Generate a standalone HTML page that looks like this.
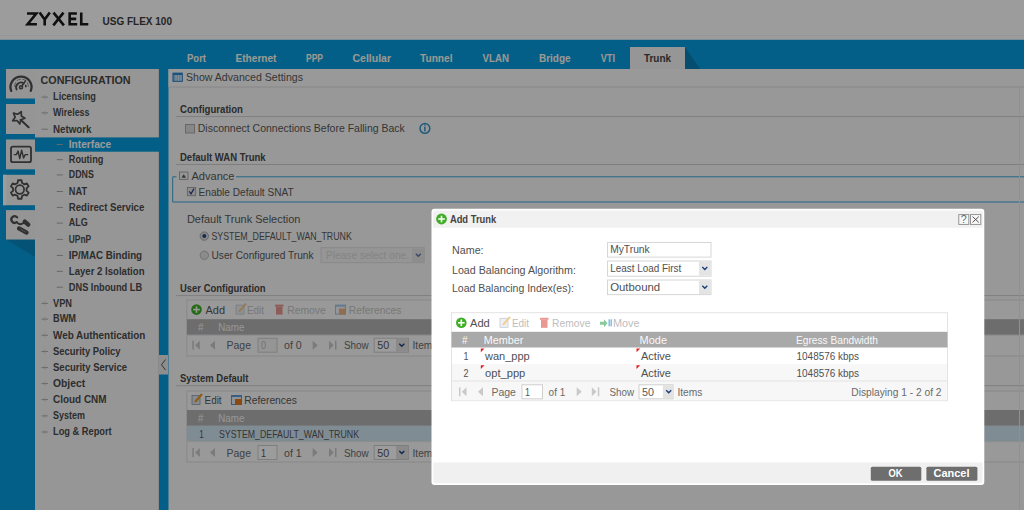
<!DOCTYPE html>
<html><head><meta charset="utf-8"><title>Zyxel USG FLEX 100 - Add Trunk</title>
<style>
html,body{margin:0;padding:0;width:1024px;height:510px;overflow:hidden;background:#5f5f5f;}
svg{display:block;font-family:"Liberation Sans",sans-serif;}
</style></head><body>
<svg width="1024" height="510" viewBox="0 0 1024 510" shape-rendering="auto">
<rect x="0.00" y="0.00" width="1024.00" height="510.00" fill="#059cdd" />
<rect x="0.00" y="0.00" width="1024.00" height="39.80" fill="#ffffff" />
<rect x="0.00" y="35.00" width="1024.00" height="1.00" fill="#faf4f8" />
<g fill="none" stroke="#1a1a1a" stroke-width="2.6" stroke-linejoin="miter" stroke-linecap="butt"><path d="M27,13.55 H36.3 L27.6,24.25 H36.9"/><path d="M39.6,12.6 L44.7,19.6 L49.8,12.6 M44.7,19.6 V25.4"/><path d="M53.5,12.6 L63.9,25.4 M63.5,12.6 L53.3,25.4"/><path d="M76.9,13.55 H69.65 V24.25 H77.2 M69.65,18.9 H76.2"/><path d="M81.25,12.4 V24.25 H88.3"/></g>
<text x="102.50" y="25.40" font-size="11.3" font-weight="bold" fill="#3c3c3c" textLength="69.50" lengthAdjust="spacingAndGlyphs" >USG FLEX 100</text>
<text x="187.00" y="61.80" font-size="10.6" font-weight="bold" fill="#fdfaf0" textLength="19.00" lengthAdjust="spacingAndGlyphs" >Port</text>
<text x="235.50" y="61.80" font-size="10.6" font-weight="bold" fill="#fdfaf0" textLength="41.00" lengthAdjust="spacingAndGlyphs" >Ethernet</text>
<text x="306.00" y="61.80" font-size="10.6" font-weight="bold" fill="#fdfaf0" textLength="17.00" lengthAdjust="spacingAndGlyphs" >PPP</text>
<text x="352.50" y="61.80" font-size="10.6" font-weight="bold" fill="#fdfaf0" textLength="38.50" lengthAdjust="spacingAndGlyphs" >Cellular</text>
<text x="420.00" y="61.80" font-size="10.6" font-weight="bold" fill="#fdfaf0" textLength="32.50" lengthAdjust="spacingAndGlyphs" >Tunnel</text>
<text x="482.60" y="61.80" font-size="10.6" font-weight="bold" fill="#fdfaf0" textLength="26.40" lengthAdjust="spacingAndGlyphs" >VLAN</text>
<text x="539.00" y="61.80" font-size="10.6" font-weight="bold" fill="#fdfaf0" textLength="31.60" lengthAdjust="spacingAndGlyphs" >Bridge</text>
<text x="600.70" y="61.80" font-size="10.6" font-weight="bold" fill="#fdfaf0" textLength="14.30" lengthAdjust="spacingAndGlyphs" >VTI</text>
<polygon points="685,47 700,69 685,69" fill="#0a7fb5"/>
<rect x="630.00" y="47.00" width="55.00" height="22.00" fill="#f6f6f6" />
<text x="644.00" y="61.80" font-size="10.6" font-weight="bold" fill="#444" textLength="27.00" lengthAdjust="spacingAndGlyphs" >Trunk</text>
<rect x="6.00" y="69.00" width="29.00" height="29.50" fill="#f4f4f4" />
<rect x="6.00" y="104.00" width="29.00" height="30.00" fill="#f4f4f4" />
<rect x="6.00" y="139.50" width="29.00" height="29.80" fill="#f4f4f4" />
<rect x="3.00" y="174.80" width="32.00" height="30.40" fill="#f6f6f6" />
<rect x="6.00" y="210.10" width="29.00" height="29.70" fill="#f4f4f4" />
<rect x="3.00" y="174.80" width="3.50" height="30.40" fill="#ffffff" />
<g fill="none" stroke="#505050" stroke-linecap="round"><path d="M11.2,90.9 A10.5,10.5 0 1 1 30.8,90.9" stroke-width="2.3"/><path d="M14.6,86.4 A7.3,7.3 0 0 1 15.6,82.5 M17.2,80.4 A7.3,7.3 0 0 1 20.6,79.2 M22.6,79.3 A7.3,7.3 0 0 1 26,80.6 M27.4,82.8 A7.3,7.3 0 0 1 28.3,86.4" stroke-width="0.8" stroke="#777"/><path d="M16.6,89.4 A4.9,4.9 0 0 1 23.6,83.2" stroke-width="1.9"/><path d="M25.9,86.6 A4.9,4.9 0 0 0 25.6,85.4" stroke-width="1.6"/><circle cx="21" cy="87.3" r="1.5" stroke-width="1.6"/><path d="M22,86 L25.4,80.8" stroke-width="1.5"/></g>
<g fill="none" stroke="#505050" stroke-width="1.7" stroke-linejoin="round"><path d="M13.50,113.08 L17.71,114.27 L21.29,111.57 L21.31,115.95 L24.95,118.30 L20.81,119.75 L19.77,123.96 L17.06,120.51 L12.68,120.80 L15.12,117.16 Z"/></g><path d="M20.6,119.8 L28.6,127.2" stroke="#505050" stroke-width="2.1" stroke-linecap="round"/>
<g fill="none" stroke="#505050" stroke-width="1.8" stroke-linejoin="round"><rect x="11" y="146.6" width="20" height="15.6" rx="2"/><polyline points="13.8,154.6 16.5,154.6 18,151 19.8,158.6 21.6,150.2 23.6,158 25.2,154.6 28.2,154.6" stroke-width="1.4"/></g>
<path d="M17.60,182.96 L18.04,180.27 L21.56,180.27 L22.00,182.96 L24.36,184.32 L26.92,183.36 L28.68,186.41 L26.56,188.14 L26.56,190.86 L28.68,192.59 L26.92,195.64 L24.36,194.68 L22.00,196.04 L21.56,198.73 L18.04,198.73 L17.60,196.04 L15.24,194.68 L12.68,195.64 L10.92,192.59 L13.04,190.86 L13.04,188.14 L10.92,186.41 L12.68,183.36 L15.24,184.32 Z" fill="none" stroke="#505050" stroke-width="1.8" stroke-linejoin="round"/><circle cx="19.8" cy="189.5" r="4.3" fill="none" stroke="#505050" stroke-width="1.7"/>
<g stroke="#505050" fill="none" stroke-linecap="round"><path d="M17.2,217.4 A3.3,3.3 0 1 0 16.6,222.2" stroke-width="2.2"/><path d="M16.6,222.2 Q19.5,225.4 22.3,223.6 L24.2,222.6" stroke-width="1.9"/><path d="M24.8,221.6 L28.2,224.6" stroke-width="4.4"/><path d="M19,228.4 L26.6,232.6" stroke-width="4.2"/></g><path d="M20.6,229.4 L25.2,231.8" stroke="#8a8a8a" stroke-width="0.9" stroke-linecap="round"/>
<polygon points="6,239.5 35,239.5 35,257" fill="#0a80b8" opacity="0.7"/>
<rect x="35.00" y="69.00" width="124.00" height="441.00" fill="#f6f6f6" />
<line x1="158.50" y1="69.00" x2="158.50" y2="510.00" stroke="#e2e2e2" stroke-width="1" />
<text x="40.60" y="83.50" font-size="11" font-weight="bold" fill="#474747" textLength="90.00" lengthAdjust="spacingAndGlyphs" >CONFIGURATION</text>
<line x1="41.60" y1="97.10" x2="47.80" y2="97.10" stroke="#a8a8a8" stroke-width="1" />
<line x1="44.70" y1="95.10" x2="44.70" y2="99.10" stroke="#c8c8c8" stroke-width="0.8" />
<text x="53.00" y="100.40" font-size="10.2" font-weight="bold" fill="#4a4a4a" textLength="43.00" lengthAdjust="spacingAndGlyphs" >Licensing</text>
<line x1="41.60" y1="112.90" x2="47.80" y2="112.90" stroke="#a8a8a8" stroke-width="1" />
<line x1="44.70" y1="110.90" x2="44.70" y2="114.90" stroke="#c8c8c8" stroke-width="0.8" />
<text x="53.00" y="116.20" font-size="10.2" font-weight="bold" fill="#4a4a4a" textLength="36.50" lengthAdjust="spacingAndGlyphs" >Wireless</text>
<line x1="41.60" y1="129.20" x2="47.80" y2="129.20" stroke="#a8a8a8" stroke-width="1" />
<text x="53.00" y="132.50" font-size="10.2" font-weight="bold" fill="#4a4a4a" textLength="38.50" lengthAdjust="spacingAndGlyphs" >Network</text>
<rect x="35.00" y="137.40" width="124.00" height="14.30" fill="#059cdd" />
<line x1="56.70" y1="144.50" x2="62.90" y2="144.50" stroke="#a8a8a8" stroke-width="1" />
<text x="68.80" y="147.80" font-size="10.2" font-weight="bold" fill="#fdfdfd" textLength="42.30" lengthAdjust="spacingAndGlyphs" >Interface</text>
<line x1="56.70" y1="159.70" x2="62.90" y2="159.70" stroke="#a8a8a8" stroke-width="1" />
<text x="68.80" y="163.00" font-size="10.2" font-weight="bold" fill="#4a4a4a" textLength="34.50" lengthAdjust="spacingAndGlyphs" >Routing</text>
<line x1="56.70" y1="174.90" x2="62.90" y2="174.90" stroke="#a8a8a8" stroke-width="1" />
<text x="68.80" y="178.20" font-size="10.2" font-weight="bold" fill="#4a4a4a" textLength="25.00" lengthAdjust="spacingAndGlyphs" >DDNS</text>
<line x1="56.70" y1="191.50" x2="62.90" y2="191.50" stroke="#a8a8a8" stroke-width="1" />
<text x="68.80" y="194.80" font-size="10.2" font-weight="bold" fill="#4a4a4a" textLength="18.20" lengthAdjust="spacingAndGlyphs" >NAT</text>
<line x1="56.70" y1="207.40" x2="62.90" y2="207.40" stroke="#a8a8a8" stroke-width="1" />
<text x="68.80" y="210.70" font-size="10.2" font-weight="bold" fill="#4a4a4a" textLength="75.50" lengthAdjust="spacingAndGlyphs" >Redirect Service</text>
<line x1="56.70" y1="223.10" x2="62.90" y2="223.10" stroke="#a8a8a8" stroke-width="1" />
<text x="68.80" y="226.40" font-size="10.2" font-weight="bold" fill="#4a4a4a" textLength="19.00" lengthAdjust="spacingAndGlyphs" >ALG</text>
<line x1="56.70" y1="239.40" x2="62.90" y2="239.40" stroke="#a8a8a8" stroke-width="1" />
<text x="68.80" y="242.70" font-size="10.2" font-weight="bold" fill="#4a4a4a" textLength="22.30" lengthAdjust="spacingAndGlyphs" >UPnP</text>
<line x1="56.70" y1="255.40" x2="62.90" y2="255.40" stroke="#a8a8a8" stroke-width="1" />
<text x="68.80" y="258.70" font-size="10.2" font-weight="bold" fill="#4a4a4a" textLength="73.30" lengthAdjust="spacingAndGlyphs" >IP/MAC Binding</text>
<line x1="56.70" y1="271.30" x2="62.90" y2="271.30" stroke="#a8a8a8" stroke-width="1" />
<text x="68.80" y="274.60" font-size="10.2" font-weight="bold" fill="#4a4a4a" textLength="75.70" lengthAdjust="spacingAndGlyphs" >Layer 2 Isolation</text>
<line x1="56.70" y1="287.20" x2="62.90" y2="287.20" stroke="#a8a8a8" stroke-width="1" />
<text x="68.80" y="290.50" font-size="10.2" font-weight="bold" fill="#4a4a4a" textLength="73.30" lengthAdjust="spacingAndGlyphs" >DNS Inbound LB</text>
<line x1="41.60" y1="303.40" x2="47.80" y2="303.40" stroke="#a8a8a8" stroke-width="1" />
<line x1="44.70" y1="301.40" x2="44.70" y2="305.40" stroke="#c8c8c8" stroke-width="0.8" />
<text x="53.00" y="306.70" font-size="10.2" font-weight="bold" fill="#4a4a4a" textLength="19.00" lengthAdjust="spacingAndGlyphs" >VPN</text>
<line x1="41.60" y1="319.10" x2="47.80" y2="319.10" stroke="#a8a8a8" stroke-width="1" />
<line x1="44.70" y1="317.10" x2="44.70" y2="321.10" stroke="#c8c8c8" stroke-width="0.8" />
<text x="53.00" y="322.40" font-size="10.2" font-weight="bold" fill="#4a4a4a" textLength="23.00" lengthAdjust="spacingAndGlyphs" >BWM</text>
<line x1="41.60" y1="335.30" x2="47.80" y2="335.30" stroke="#a8a8a8" stroke-width="1" />
<line x1="44.70" y1="333.30" x2="44.70" y2="337.30" stroke="#c8c8c8" stroke-width="0.8" />
<text x="53.00" y="338.60" font-size="10.2" font-weight="bold" fill="#4a4a4a" textLength="92.30" lengthAdjust="spacingAndGlyphs" >Web Authentication</text>
<line x1="41.60" y1="351.50" x2="47.80" y2="351.50" stroke="#a8a8a8" stroke-width="1" />
<line x1="44.70" y1="349.50" x2="44.70" y2="353.50" stroke="#c8c8c8" stroke-width="0.8" />
<text x="53.00" y="354.80" font-size="10.2" font-weight="bold" fill="#4a4a4a" textLength="67.50" lengthAdjust="spacingAndGlyphs" >Security Policy</text>
<line x1="41.60" y1="367.60" x2="47.80" y2="367.60" stroke="#a8a8a8" stroke-width="1" />
<line x1="44.70" y1="365.60" x2="44.70" y2="369.60" stroke="#c8c8c8" stroke-width="0.8" />
<text x="53.00" y="370.90" font-size="10.2" font-weight="bold" fill="#4a4a4a" textLength="74.00" lengthAdjust="spacingAndGlyphs" >Security Service</text>
<line x1="41.60" y1="383.60" x2="47.80" y2="383.60" stroke="#a8a8a8" stroke-width="1" />
<line x1="44.70" y1="381.60" x2="44.70" y2="385.60" stroke="#c8c8c8" stroke-width="0.8" />
<text x="53.00" y="386.90" font-size="10.2" font-weight="bold" fill="#4a4a4a" textLength="32.20" lengthAdjust="spacingAndGlyphs" >Object</text>
<line x1="41.60" y1="399.60" x2="47.80" y2="399.60" stroke="#a8a8a8" stroke-width="1" />
<line x1="44.70" y1="397.60" x2="44.70" y2="401.60" stroke="#c8c8c8" stroke-width="0.8" />
<text x="53.00" y="402.90" font-size="10.2" font-weight="bold" fill="#4a4a4a" textLength="53.50" lengthAdjust="spacingAndGlyphs" >Cloud CNM</text>
<line x1="41.60" y1="415.90" x2="47.80" y2="415.90" stroke="#a8a8a8" stroke-width="1" />
<line x1="44.70" y1="413.90" x2="44.70" y2="417.90" stroke="#c8c8c8" stroke-width="0.8" />
<text x="53.00" y="419.20" font-size="10.2" font-weight="bold" fill="#4a4a4a" textLength="32.00" lengthAdjust="spacingAndGlyphs" >System</text>
<line x1="41.60" y1="432.00" x2="47.80" y2="432.00" stroke="#a8a8a8" stroke-width="1" />
<line x1="44.70" y1="430.00" x2="44.70" y2="434.00" stroke="#c8c8c8" stroke-width="0.8" />
<text x="53.00" y="435.30" font-size="10.2" font-weight="bold" fill="#4a4a4a" textLength="58.70" lengthAdjust="spacingAndGlyphs" >Log &amp; Report</text>
<rect x="159.00" y="355.00" width="9.00" height="19.50" fill="#e8e8e8" />
<polyline points="165.5,359.5 161.5,364.8 165.5,370" fill="none" stroke="#555" stroke-width="1"/>
<rect x="168.50" y="69.00" width="855.50" height="441.00" fill="#f9f9f9" />
<rect x="168.50" y="69.00" width="855.50" height="18.00" fill="#fbfbfb" />
<line x1="168.50" y1="87.00" x2="1024.00" y2="87.00" stroke="#dcdcdc" stroke-width="1" />
<rect x="172.40" y="72.60" width="10.50" height="9.30" fill="#2f86cc" />
<rect x="173.60" y="75.00" width="8.10" height="5.80" fill="#8cc4ec" />
<rect x="175.60" y="75.00" width="0.90" height="5.80" fill="#f4f8fc" />
<rect x="178.20" y="75.00" width="0.90" height="5.80" fill="#f4f8fc" />
<rect x="180.60" y="75.00" width="0.90" height="5.80" fill="#f4f8fc" />
<text x="186.00" y="81.30" font-size="11" font-weight="normal" fill="#585858" textLength="117.00" lengthAdjust="spacingAndGlyphs" >Show Advanced Settings</text>
<text x="180.00" y="112.70" font-size="10.5" font-weight="bold" fill="#474747" textLength="63.00" lengthAdjust="spacingAndGlyphs" >Configuration</text>
<line x1="176.00" y1="116.60" x2="1024.00" y2="116.60" stroke="#cfcfcf" stroke-width="1" />
<rect x="185.50" y="124.50" width="9.00" height="8.50" fill="#dddddd" stroke="#aaaaaa" stroke-width="1"/>
<text x="197.80" y="132.00" font-size="11" font-weight="normal" fill="#585858" textLength="207.00" lengthAdjust="spacingAndGlyphs" >Disconnect Connections Before Falling Back</text>
<circle cx="424.9" cy="128.4" r="4.9" fill="none" stroke="#3596c4" stroke-width="1.5"/>
<rect x="424.20" y="126.60" width="1.40" height="4.80" fill="#2f86c8" />
<rect x="424.20" y="124.40" width="1.40" height="1.20" fill="#2f86c8" />
<text x="180.00" y="160.60" font-size="10.5" font-weight="bold" fill="#474747" textLength="85.60" lengthAdjust="spacingAndGlyphs" >Default WAN Trunk</text>
<line x1="176.00" y1="164.50" x2="1024.00" y2="164.50" stroke="#cfcfcf" stroke-width="1" />
<path d="M176.5,176.8 H172.7 V202 H1030" fill="none" stroke="#3aa6dc" stroke-width="1"/>
<line x1="236.00" y1="176.80" x2="1030.00" y2="176.80" stroke="#3aa6dc" stroke-width="1" />
<rect x="179.50" y="172.00" width="8.50" height="7.50" fill="#f2f2f2" stroke="#999" stroke-width="0.8"/>
<polygon points="181.5,177.8 183.8,174.3 186,177.8" fill="#555"/>
<text x="191.50" y="179.50" font-size="11" font-weight="normal" fill="#585858" textLength="43.00" lengthAdjust="spacingAndGlyphs" >Advance</text>
<rect x="187.30" y="187.50" width="8.40" height="8.20" fill="#e6e6e6" stroke="#999" stroke-width="0.8"/>
<polyline points="189.2,191.4 191,193.8 194,188.6" fill="none" stroke="#2a3a8a" stroke-width="1.2"/>
<text x="198.60" y="196.00" font-size="11" font-weight="normal" fill="#585858" textLength="95.00" lengthAdjust="spacingAndGlyphs" >Enable Default SNAT</text>
<text x="186.90" y="223.30" font-size="11.5" font-weight="normal" fill="#585858" textLength="113.50" lengthAdjust="spacingAndGlyphs" >Default Trunk Selection</text>
<circle cx="204.3" cy="236.1" r="4.2" fill="#ddd" stroke="#999" stroke-width="0.8"/><circle cx="204.3" cy="236.1" r="2" fill="#1c4a80"/>
<text x="211.50" y="240.20" font-size="11" font-weight="normal" fill="#585858" textLength="140.30" lengthAdjust="spacingAndGlyphs" >SYSTEM_DEFAULT_WAN_TRUNK</text>
<circle cx="204.3" cy="255.3" r="4.2" fill="#e4e4e4" stroke="#aaa" stroke-width="0.8"/>
<text x="211.50" y="259.40" font-size="11" font-weight="normal" fill="#585858" textLength="102.00" lengthAdjust="spacingAndGlyphs" >User Configured Trunk</text>
<rect x="321.00" y="247.60" width="103.20" height="15.10" fill="#f3f3f3" stroke="#e0e0e0" stroke-width="1"/>
<rect x="412.00" y="248.50" width="12.00" height="13.50" fill="#e6e6e6" />
<text x="326.00" y="258.80" font-size="11" font-weight="normal" fill="#d9d9d9" textLength="83.00" lengthAdjust="spacingAndGlyphs" >Please select one.</text>
<polyline points="415.8,253.8 418.3,256.3 420.8,253.8" fill="none" stroke="#5a78a8" stroke-width="1.3"/>
<text x="180.00" y="291.70" font-size="10.5" font-weight="bold" fill="#474747" textLength="85.60" lengthAdjust="spacingAndGlyphs" >User Configuration</text>
<line x1="176.00" y1="295.60" x2="1024.00" y2="295.60" stroke="#cfcfcf" stroke-width="1" />
<rect x="186.90" y="300.00" width="843.10" height="56.00" fill="#fafafa" stroke="#dedede" stroke-width="1"/>
<circle cx="196.5" cy="309.6" r="5.3" fill="#3fae26"/>
<rect x="193.20" y="308.80" width="6.60" height="1.60" fill="#f4fff0" />
<rect x="195.70" y="306.30" width="1.60" height="6.60" fill="#f4fff0" />
<text x="205.50" y="313.50" font-size="11" font-weight="normal" fill="#585858" textLength="19.50" lengthAdjust="spacingAndGlyphs" >Add</text>
<g opacity="0.5"><rect x="236" y="305.1" width="8" height="9" fill="#dfe3ea" stroke="#8a9ab0" stroke-width="0.8"/><line x1="239" y1="311.6" x2="246" y2="303.6" stroke="#e89a1a" stroke-width="2"/></g>
<text x="247.00" y="313.50" font-size="11" font-weight="normal" fill="#c4c4c4" textLength="17.00" lengthAdjust="spacingAndGlyphs" >Edit</text>
<g opacity="0.55"><rect x="275" y="304.6" width="8.5" height="2" fill="#d9443a"/><rect x="276" y="306.6" width="6.5" height="8" fill="#d9443a"/></g>
<text x="287.20" y="313.50" font-size="11" font-weight="normal" fill="#c4c4c4" textLength="38.60" lengthAdjust="spacingAndGlyphs" >Remove</text>
<g opacity="0.55"><rect x="335" y="304.6" width="11" height="10" fill="#5b9bd8"/><rect x="336" y="306.6" width="9" height="7" fill="#e8eef5"/><rect x="339" y="308.6" width="7" height="6" fill="#e07a20"/></g>
<text x="348.80" y="313.50" font-size="11" font-weight="normal" fill="#c4c4c4" textLength="52.70" lengthAdjust="spacingAndGlyphs" >References</text>
<rect x="186.90" y="319.20" width="843.10" height="15.90" fill="#b2b2b2" />
<text x="198.00" y="331.00" font-size="10" font-weight="normal" fill="#f5f5f5" textLength="5.50" lengthAdjust="spacingAndGlyphs" >#</text>
<text x="218.30" y="331.00" font-size="11" font-weight="normal" fill="#f5f5f5" textLength="26.00" lengthAdjust="spacingAndGlyphs" >Name</text>
<line x1="186.90" y1="335.10" x2="1030.00" y2="335.10" stroke="#e5e5e5" stroke-width="1" />
<rect x="192.30" y="340.70" width="1.50" height="9.00" fill="#c9c9c9" />
<polygon points="199.8,340.7 195.10000000000002,345.2 199.8,349.7" fill="#c9c9c9"/>
<polygon points="215,340.7 210,345.2 215,349.7" fill="#c9c9c9"/>
<text x="226.50" y="349.20" font-size="11" font-weight="normal" fill="#6a6a6a" textLength="24.50" lengthAdjust="spacingAndGlyphs" >Page</text>
<rect x="258.00" y="338.20" width="19.00" height="14.00" fill="#f4f4f4" stroke="#cfcfcf" stroke-width="1"/>
<text x="261.00" y="349.20" font-size="11" font-weight="normal" fill="#bbb" textLength="5.00" lengthAdjust="spacingAndGlyphs" >0</text>
<text x="284.00" y="349.20" font-size="11" font-weight="normal" fill="#6a6a6a" textLength="17.70" lengthAdjust="spacingAndGlyphs" >of 0</text>
<polygon points="312.7,340.7 317.7,345.2 312.7,349.7" fill="#c9c9c9"/>
<polygon points="329,340.7 333.7,345.2 329,349.7" fill="#c9c9c9"/>
<rect x="335.00" y="340.70" width="1.50" height="9.00" fill="#c9c9c9" />
<text x="344.00" y="349.20" font-size="11" font-weight="normal" fill="#6a6a6a" textLength="24.70" lengthAdjust="spacingAndGlyphs" >Show</text>
<rect x="374.20" y="338.20" width="34.20" height="14.00" fill="#ffffff" stroke="#cfcfcf" stroke-width="1"/>
<rect x="396.00" y="338.70" width="11.90" height="13.00" fill="#e2e2e2" />
<polyline points="399.3,343.7 401.8,346.2 404.3,343.7" fill="none" stroke="#1d3f7a" stroke-width="1.4"/>
<text x="377.20" y="349.20" font-size="11" font-weight="normal" fill="#585858" textLength="12.00" lengthAdjust="spacingAndGlyphs" >50</text>
<text x="412.50" y="349.20" font-size="11" font-weight="normal" fill="#6a6a6a" textLength="25.00" lengthAdjust="spacingAndGlyphs" >Items</text>
<text x="180.00" y="381.80" font-size="10.5" font-weight="bold" fill="#474747" textLength="68.40" lengthAdjust="spacingAndGlyphs" >System Default</text>
<line x1="176.00" y1="385.70" x2="1024.00" y2="385.70" stroke="#cfcfcf" stroke-width="1" />
<rect x="186.90" y="391.00" width="843.10" height="71.00" fill="#fafafa" stroke="#dedede" stroke-width="1"/>
<g opacity="1"><rect x="192" y="395.5" width="8" height="9" fill="#dfe3ea" stroke="#8a9ab0" stroke-width="0.8"/><line x1="195" y1="402" x2="202" y2="394" stroke="#e89a1a" stroke-width="2"/></g>
<text x="204.60" y="404.00" font-size="11" font-weight="normal" fill="#585858" textLength="17.00" lengthAdjust="spacingAndGlyphs" >Edit</text>
<g opacity="1"><rect x="231" y="395" width="11" height="10" fill="#5b9bd8"/><rect x="232" y="397" width="9" height="7" fill="#e8eef5"/><rect x="235" y="399" width="7" height="6" fill="#e07a20"/></g>
<text x="244.30" y="404.00" font-size="11" font-weight="normal" fill="#585858" textLength="52.50" lengthAdjust="spacingAndGlyphs" >References</text>
<rect x="186.90" y="410.00" width="843.10" height="15.80" fill="#b2b2b2" />
<text x="198.00" y="421.80" font-size="10" font-weight="normal" fill="#f5f5f5" textLength="5.50" lengthAdjust="spacingAndGlyphs" >#</text>
<text x="218.30" y="421.50" font-size="11" font-weight="normal" fill="#f5f5f5" textLength="26.00" lengthAdjust="spacingAndGlyphs" >Name</text>
<rect x="186.90" y="425.80" width="843.10" height="15.80" fill="#d2e5f2" />
<text x="199.20" y="437.80" font-size="11" font-weight="normal" fill="#585858" textLength="4.50" lengthAdjust="spacingAndGlyphs" >1</text>
<text x="219.00" y="437.50" font-size="11" font-weight="normal" fill="#585858" textLength="140.00" lengthAdjust="spacingAndGlyphs" >SYSTEM_DEFAULT_WAN_TRUNK</text>
<line x1="186.90" y1="441.60" x2="1030.00" y2="441.60" stroke="#e5e5e5" stroke-width="1" />
<rect x="192.30" y="448.00" width="1.50" height="9.00" fill="#c9c9c9" />
<polygon points="199.8,448.0 195.10000000000002,452.5 199.8,457.0" fill="#c9c9c9"/>
<polygon points="215,448.0 210,452.5 215,457.0" fill="#c9c9c9"/>
<text x="226.50" y="456.50" font-size="11" font-weight="normal" fill="#6a6a6a" textLength="24.50" lengthAdjust="spacingAndGlyphs" >Page</text>
<rect x="258.00" y="445.50" width="19.00" height="14.00" fill="#ffffff" stroke="#cfcfcf" stroke-width="1"/>
<text x="261.00" y="456.50" font-size="11" font-weight="normal" fill="#585858" textLength="5.00" lengthAdjust="spacingAndGlyphs" >1</text>
<text x="284.00" y="456.50" font-size="11" font-weight="normal" fill="#6a6a6a" textLength="17.70" lengthAdjust="spacingAndGlyphs" >of 1</text>
<polygon points="312.7,448.0 317.7,452.5 312.7,457.0" fill="#c9c9c9"/>
<polygon points="329,448.0 333.7,452.5 329,457.0" fill="#c9c9c9"/>
<rect x="335.00" y="448.00" width="1.50" height="9.00" fill="#c9c9c9" />
<text x="344.00" y="456.50" font-size="11" font-weight="normal" fill="#6a6a6a" textLength="24.70" lengthAdjust="spacingAndGlyphs" >Show</text>
<rect x="374.20" y="445.50" width="34.20" height="14.00" fill="#ffffff" stroke="#cfcfcf" stroke-width="1"/>
<rect x="396.00" y="446.00" width="11.90" height="13.00" fill="#e2e2e2" />
<polyline points="399.3,451.0 401.8,453.5 404.3,451.0" fill="none" stroke="#1d3f7a" stroke-width="1.4"/>
<text x="377.20" y="456.50" font-size="11" font-weight="normal" fill="#585858" textLength="12.00" lengthAdjust="spacingAndGlyphs" >50</text>
<text x="412.50" y="456.50" font-size="11" font-weight="normal" fill="#6a6a6a" textLength="25.00" lengthAdjust="spacingAndGlyphs" >Items</text>
<line x1="1019.50" y1="87.00" x2="1019.50" y2="510.00" stroke="#ececec" stroke-width="1" />
<rect x="0.00" y="0.00" width="1024.00" height="510.00" fill="#000" fill-opacity="0.39"/>
<rect x="431.5" y="208.8" width="552.8" height="276.2" rx="3" fill="#ffffff"/>
<path d="M433,227.7 V212.8 Q433,210.6 435.2,210.6 H980.6 Q982.8,210.6 982.8,212.8 V227.7 Z" fill="#f1f1f1"/>
<path d="M433.3,462.6 V480.8 Q433.3,483.2 435.7,483.2 H980.1 Q982.5,483.2 982.5,480.8 V462.6 Z" fill="#f0f0f0"/>
<circle cx="441.5" cy="219" r="5.4" fill="#3fae26"/>
<rect x="438.20" y="218.20" width="6.60" height="1.60" fill="#f4fff0" />
<rect x="440.70" y="215.70" width="1.60" height="6.60" fill="#f4fff0" />
<text x="449.90" y="223.10" font-size="10.8" font-weight="bold" fill="#444" textLength="46.30" lengthAdjust="spacingAndGlyphs" >Add Trunk</text>
<rect x="958.80" y="214.60" width="10.00" height="9.80" fill="#f7f7f7" stroke="#8a8a8a" stroke-width="0.9"/>
<text x="960.80" y="223.00" font-size="10" font-weight="normal" fill="#666" textLength="6.00" lengthAdjust="spacingAndGlyphs" >?</text>
<rect x="970.50" y="214.60" width="10.30" height="9.80" fill="#f7f7f7" stroke="#8a8a8a" stroke-width="0.9"/>
<path d="M972.5,216.6 L978.8,222.4 M978.8,216.6 L972.5,222.4" stroke="#555" stroke-width="1"/>
<text x="452.00" y="254.10" font-size="11" font-weight="normal" fill="#505050" textLength="31.60" lengthAdjust="spacingAndGlyphs" >Name:</text>
<text x="452.00" y="273.70" font-size="11" font-weight="normal" fill="#505050" textLength="123.90" lengthAdjust="spacingAndGlyphs" >Load Balancing Algorithm:</text>
<text x="452.00" y="292.10" font-size="11" font-weight="normal" fill="#505050" textLength="121.80" lengthAdjust="spacingAndGlyphs" >Load Balancing Index(es):</text>
<rect x="607.50" y="242.50" width="103.50" height="14.60" fill="#ffffff" stroke="#d6d6d6" stroke-width="1"/>
<text x="610.20" y="253.10" font-size="11" font-weight="normal" fill="#505050" textLength="39.50" lengthAdjust="spacingAndGlyphs" >MyTrunk</text>
<rect x="607.50" y="261.00" width="103.50" height="15.20" fill="#ffffff" stroke="#d6d6d6" stroke-width="1"/>
<rect x="699.00" y="261.50" width="11.50" height="14.20" fill="#e4e4e4" />
<polyline points="702.3,267.1 704.8,269.6 707.3,267.1" fill="none" stroke="#1d3f7a" stroke-width="1.4"/>
<text x="610.20" y="272.00" font-size="11" font-weight="normal" fill="#505050" textLength="71.00" lengthAdjust="spacingAndGlyphs" >Least Load First</text>
<rect x="607.50" y="280.00" width="103.50" height="14.60" fill="#ffffff" stroke="#d6d6d6" stroke-width="1"/>
<rect x="699.00" y="280.50" width="11.50" height="13.60" fill="#e4e4e4" />
<polyline points="702.3,285.8 704.8,288.3 707.3,285.8" fill="none" stroke="#1d3f7a" stroke-width="1.4"/>
<text x="610.20" y="290.70" font-size="11" font-weight="normal" fill="#505050" textLength="50.00" lengthAdjust="spacingAndGlyphs" >Outbound</text>
<rect x="451.50" y="312.70" width="496.00" height="88.00" fill="#ffffff" stroke="#e3e3e3" stroke-width="1"/>
<circle cx="461.3" cy="322.8" r="5.3" fill="#3fae26"/>
<rect x="458.00" y="322.00" width="6.60" height="1.60" fill="#f4fff0" />
<rect x="460.50" y="319.50" width="1.60" height="6.60" fill="#f4fff0" />
<text x="470.00" y="326.80" font-size="11" font-weight="normal" fill="#505050" textLength="19.80" lengthAdjust="spacingAndGlyphs" >Add</text>
<g opacity="0.5"><rect x="500" y="318.3" width="8" height="9" fill="#dfe3ea" stroke="#8a9ab0" stroke-width="0.8"/><line x1="503" y1="324.8" x2="510" y2="316.8" stroke="#e89a1a" stroke-width="2"/></g>
<text x="512.00" y="326.80" font-size="11" font-weight="normal" fill="#bdbdbd" textLength="17.00" lengthAdjust="spacingAndGlyphs" >Edit</text>
<g opacity="0.55"><rect x="540" y="317.8" width="8.5" height="2" fill="#d9443a"/><rect x="541" y="319.8" width="6.5" height="8" fill="#d9443a"/></g>
<text x="552.00" y="326.80" font-size="11" font-weight="normal" fill="#bdbdbd" textLength="38.40" lengthAdjust="spacingAndGlyphs" >Remove</text>
<g opacity="0.6"><polygon points="600,321.8 604,321.8 604,319.3 607.5,323.3 604,327.3 604,324.8 600,324.8" fill="#3aa85a"/><rect x="608.5" y="319.3" width="1.4" height="7" fill="#2a8ad0"/><rect x="610.5" y="319.3" width="1.4" height="7" fill="#2a8ad0"/></g>
<text x="613.00" y="326.80" font-size="11" font-weight="normal" fill="#bdbdbd" textLength="26.60" lengthAdjust="spacingAndGlyphs" >Move</text>
<rect x="451.50" y="331.80" width="496.00" height="15.70" fill="#a9a9a9" />
<text x="462.00" y="343.60" font-size="10" font-weight="normal" fill="#f8f8f8" textLength="5.50" lengthAdjust="spacingAndGlyphs" >#</text>
<text x="483.70" y="343.60" font-size="11" font-weight="normal" fill="#f8f8f8" textLength="39.70" lengthAdjust="spacingAndGlyphs" >Member</text>
<text x="639.60" y="343.60" font-size="11" font-weight="normal" fill="#f8f8f8" textLength="27.40" lengthAdjust="spacingAndGlyphs" >Mode</text>
<text x="796.00" y="343.60" font-size="11" font-weight="normal" fill="#f8f8f8" textLength="82.00" lengthAdjust="spacingAndGlyphs" >Egress Bandwidth</text>
<rect x="452.00" y="364.20" width="495.00" height="16.80" fill="#f7f7f7" />
<text x="463.50" y="359.90" font-size="11" font-weight="normal" fill="#505050" textLength="5.00" lengthAdjust="spacingAndGlyphs" >1</text>
<polygon points="480.8,348.5 484.5,348.5 480.8,352.29999999999995" fill="#e02020"/>
<text x="485.00" y="359.90" font-size="11" font-weight="normal" fill="#505050" textLength="44.70" lengthAdjust="spacingAndGlyphs" >wan_ppp</text>
<polygon points="636.5,348.5 640.2,348.5 636.5,352.29999999999995" fill="#e02020"/>
<text x="641.00" y="359.90" font-size="11" font-weight="normal" fill="#505050" textLength="30.00" lengthAdjust="spacingAndGlyphs" >Active</text>
<text x="796.60" y="359.90" font-size="11" font-weight="normal" fill="#505050" textLength="62.30" lengthAdjust="spacingAndGlyphs" >1048576 kbps</text>
<text x="463.50" y="376.60" font-size="11" font-weight="normal" fill="#505050" textLength="5.00" lengthAdjust="spacingAndGlyphs" >2</text>
<polygon points="480.8,365.20000000000005 484.5,365.20000000000005 480.8,369.0" fill="#e02020"/>
<text x="485.00" y="376.60" font-size="11" font-weight="normal" fill="#505050" textLength="40.30" lengthAdjust="spacingAndGlyphs" >opt_ppp</text>
<polygon points="636.5,365.20000000000005 640.2,365.20000000000005 636.5,369.0" fill="#e02020"/>
<text x="641.00" y="376.60" font-size="11" font-weight="normal" fill="#505050" textLength="30.00" lengthAdjust="spacingAndGlyphs" >Active</text>
<text x="796.60" y="376.60" font-size="11" font-weight="normal" fill="#505050" textLength="62.30" lengthAdjust="spacingAndGlyphs" >1048576 kbps</text>
<rect x="452.00" y="381.00" width="495.00" height="19.20" fill="#f7f7f7" />
<line x1="451.50" y1="381.00" x2="947.50" y2="381.00" stroke="#e3e3e3" stroke-width="1" />
<rect x="459.00" y="387.30" width="1.50" height="9.00" fill="#c9c9c9" />
<polygon points="466.5,387.3 461.8,391.8 466.5,396.3" fill="#c9c9c9"/>
<polygon points="483,387.3 478,391.8 483,396.3" fill="#c9c9c9"/>
<text x="491.40" y="395.80" font-size="11" font-weight="normal" fill="#6a6a6a" textLength="24.60" lengthAdjust="spacingAndGlyphs" >Page</text>
<rect x="522.00" y="384.80" width="20.50" height="14.00" fill="#ffffff" stroke="#cfcfcf" stroke-width="1"/>
<text x="525.00" y="395.80" font-size="11" font-weight="normal" fill="#585858" textLength="5.00" lengthAdjust="spacingAndGlyphs" >1</text>
<text x="548.60" y="395.80" font-size="11" font-weight="normal" fill="#6a6a6a" textLength="16.60" lengthAdjust="spacingAndGlyphs" >of 1</text>
<polygon points="576.7,387.3 581.7,391.8 576.7,396.3" fill="#c9c9c9"/>
<polygon points="591.8,387.3 596.5,391.8 591.8,396.3" fill="#c9c9c9"/>
<rect x="597.80" y="387.30" width="1.50" height="9.00" fill="#c9c9c9" />
<text x="609.50" y="395.80" font-size="11" font-weight="normal" fill="#6a6a6a" textLength="24.60" lengthAdjust="spacingAndGlyphs" >Show</text>
<rect x="639.00" y="384.80" width="34.00" height="14.00" fill="#ffffff" stroke="#cfcfcf" stroke-width="1"/>
<rect x="662.90" y="385.30" width="9.60" height="13.00" fill="#e2e2e2" />
<polyline points="666.1999999999999,390.3 668.6999999999999,392.8 671.1999999999999,390.3" fill="none" stroke="#1d3f7a" stroke-width="1.4"/>
<text x="642.00" y="395.80" font-size="11" font-weight="normal" fill="#585858" textLength="12.00" lengthAdjust="spacingAndGlyphs" >50</text>
<text x="677.40" y="395.80" font-size="11" font-weight="normal" fill="#6a6a6a" textLength="25.00" lengthAdjust="spacingAndGlyphs" >Items</text>
<text x="851.30" y="395.80" font-size="11" font-weight="normal" fill="#6a6a6a" textLength="90.20" lengthAdjust="spacingAndGlyphs" >Displaying 1 - 2 of 2</text>
<rect x="870.80" y="466.80" width="50.50" height="14.00" fill="#6e6e6e" rx="1.5"/>
<text x="888.50" y="476.80" font-size="11" font-weight="bold" fill="#ffffff" textLength="14.00" lengthAdjust="spacingAndGlyphs" >OK</text>
<rect x="926.40" y="466.80" width="51.00" height="14.00" fill="#6e6e6e" rx="1.5"/>
<text x="933.50" y="476.80" font-size="11" font-weight="bold" fill="#ffffff" textLength="36.00" lengthAdjust="spacingAndGlyphs" >Cancel</text>
</svg>
</body></html>
